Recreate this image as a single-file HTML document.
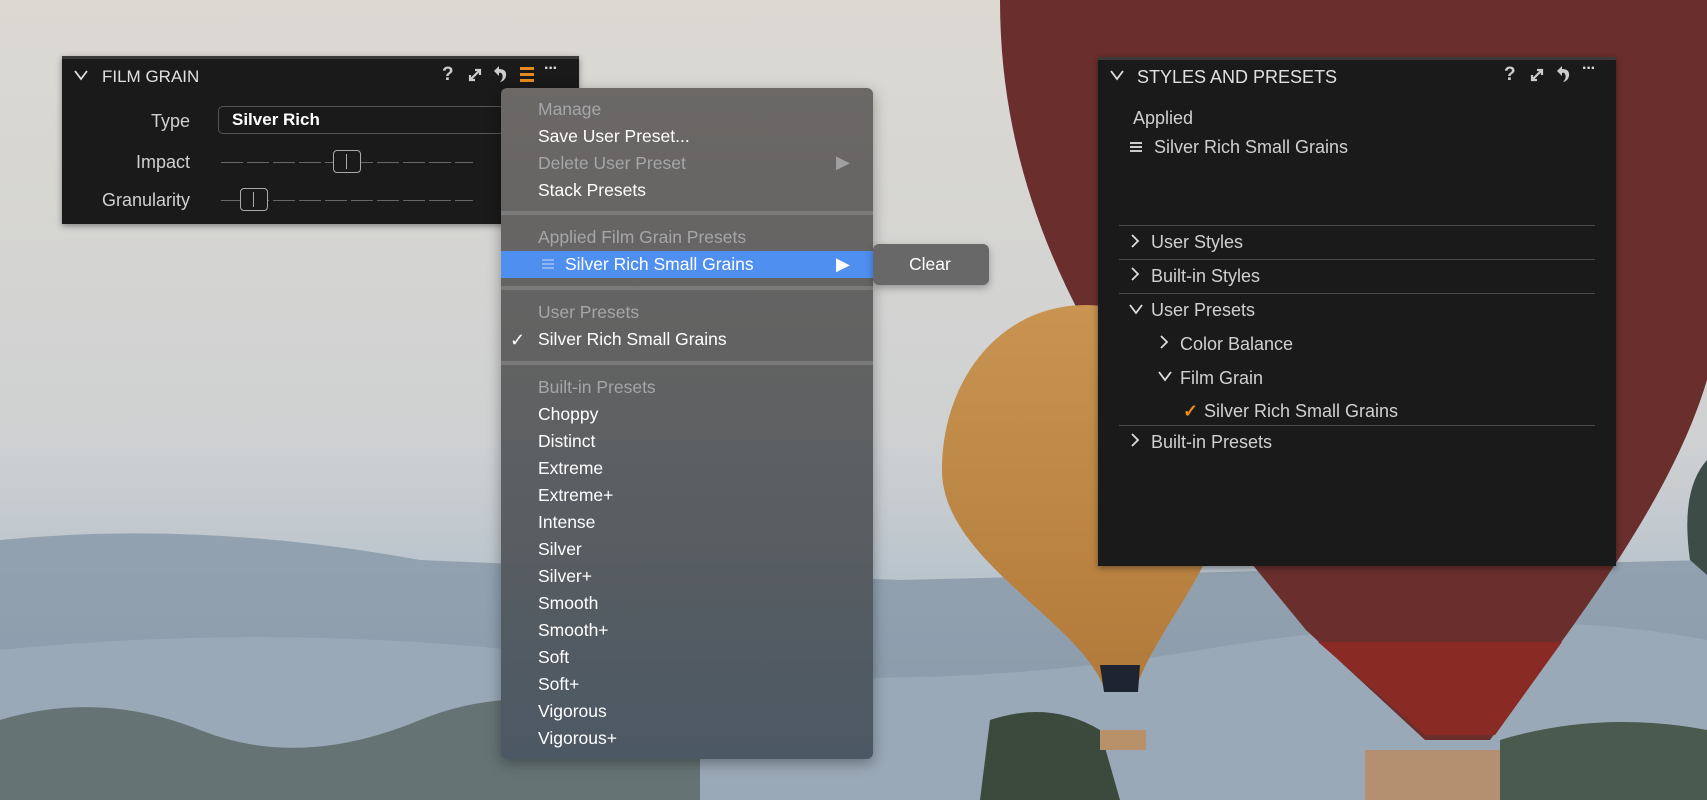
<!DOCTYPE html>
<html><head><meta charset="utf-8"><style>
*{margin:0;padding:0;box-sizing:border-box}
body{width:1707px;height:800px;overflow:hidden;position:relative;font-family:"Liberation Sans",sans-serif;background:#d8d6d2}
.abs{position:absolute}
.panel{position:absolute;background:#1a1a1a;border-top:3px solid #3a3a3a;box-shadow:0 2px 6px rgba(0,0,0,.4)}
.t{position:absolute;white-space:nowrap;line-height:1}
.mi{position:absolute;left:538px;font-size:17.5px;color:#fff;white-space:nowrap;line-height:1}
.dim{color:#a4a6a8}
.sep{position:absolute;left:0;width:372px;height:4px;background:rgba(150,150,150,.45)}
.ps{color:#d0d0d0;font-size:18px}
.hl{position:absolute;left:1119px;width:476px;height:1px;background:#4a4a4a}
</style></head><body>
<svg class="abs" style="left:0;top:0" width="1707" height="800">
<defs>
<linearGradient id="sky" x1="0" y1="0" x2="0" y2="1"><stop offset="0" stop-color="#dcd9d3"/><stop offset=".55" stop-color="#cfd1d2"/><stop offset=".75" stop-color="#b6c2cc"/><stop offset="1" stop-color="#8b9cac"/></linearGradient>
<linearGradient id="org" x1="0" y1="0" x2="0" y2="1"><stop offset="0" stop-color="#c89450"/><stop offset="1" stop-color="#b27a3a"/></linearGradient>
</defs>
<rect width="1707" height="800" fill="url(#sky)"/>
<path d="M0 540 Q200 520 420 560 L900 580 L1707 560 L1707 800 L0 800Z" fill="#8797a8" opacity=".8"/>
<path d="M0 650 Q300 620 600 660 T1200 650 T1707 640 L1707 800 L0 800Z" fill="#9aa9b7"/>
<path d="M0 720 Q100 690 200 730 T420 720 T700 740 L700 800 L0 800Z" fill="#4f5d58" opacity=".7"/>
<path d="M990 720 Q1050 700 1100 730 L1120 800 L980 800Z" fill="#3c4a3e"/>
<path d="M1500 740 Q1600 710 1707 730 L1707 800 L1500 800Z" fill="#4a5a4e"/>
<path d="M1707 460 Q1680 490 1690 560 L1707 575Z" fill="#3e4c48"/>
<path d="M1000 0 L1707 0 L1707 380 C1680 470 1620 560 1570 630 L1490 740 L1425 740 L1306 630 C 1150 440 1000 260 1000 0Z" fill="#6a2e2c"/>
<path d="M1318 642 L1562 642 L1495 735 L1425 735Z" fill="#8a2a24"/>
<path d="M1086 305 C 1170 305 1232 380 1230 470 C 1228 560 1160 620 1135 690 L1105 690 C 1080 620 942 560 942 470 C 942 380 1000 305 1086 305Z" fill="url(#org)"/>
<path d="M1100 665 L1140 665 L1138 692 L1104 692Z" fill="#1e2430"/>
<rect x="1365" y="750" width="135" height="50" fill="#b49070"/>
<rect x="1100" y="730" width="46" height="20" fill="#b8906a"/>
</svg>

<!-- FILM GRAIN -->
<div class="panel" style="left:62px;top:56px;width:517px;height:168px">
 <svg class="abs" style="left:12px;top:10px" width="14" height="12"><path d="M1 2 L7 10 L13 2" stroke="#ddd" stroke-width="1.8" fill="none"/></svg>
 <div class="t" style="left:40px;top:9px;font-size:17px;color:#e0e0e0">FILM GRAIN</div>
 <div class="t" style="left:380px;top:6px;font-size:19px;color:#ccc;font-weight:bold">?</div>
 <svg class="abs" style="left:405px;top:8px" width="16" height="16"><path d="M3 13 L13 3 M8 3 H13 V8 M3 8 V13 H8" stroke="#ccc" stroke-width="2.2" fill="none"/></svg>
 <svg class="abs" style="left:430px;top:6px" width="18" height="18"><path d="M2 6 L7 1 V4 Q15 4 14 11 Q13 16 8 17 Q12 13 10 9 Q9 7 7 8 V11Z" fill="#ccc"/></svg>
 <div class="abs" style="left:458px;top:8px;width:14px;height:3px;background:#e58a1e;box-shadow:0 6px 0 #e58a1e,0 12px 0 #e58a1e"></div>
 <div class="t" style="left:482px;top:2px;font-size:16px;color:#ddd;font-weight:bold;letter-spacing:-1px">···</div>
 <div class="t" style="left:85px;top:53px;font-size:18px;color:#d0d0d0;width:43px;text-align:right">Type</div>
 <div class="abs" style="left:156px;top:47px;width:300px;height:28px;border:1.5px solid #555;border-radius:5px"></div>
 <div class="t" style="left:170px;top:52px;font-size:17px;color:#fff;font-weight:bold">Silver Rich</div>
 <div class="t" style="left:40px;top:94px;font-size:18px;color:#d0d0d0;width:88px;text-align:right">Impact</div>
 <div class="t" style="left:0;top:132px;font-size:18px;color:#d0d0d0;width:128px;text-align:right">Granularity</div>
 <div class="abs" style="left:159px;top:103px;width:252px;height:1px;background:repeating-linear-gradient(90deg,#666 0 22px,transparent 22px 26px)"></div>
 <div class="abs" style="left:159px;top:141px;width:252px;height:1px;background:repeating-linear-gradient(90deg,#666 0 22px,transparent 22px 26px)"></div>
 <div class="abs" style="left:271px;top:91px;width:28px;height:23px;border:1.5px solid #aaa;border-radius:4px;background:#1a1a1a"></div>
 <div class="abs" style="left:284px;top:95px;width:1px;height:15px;background:#aaa"></div>
 <div class="abs" style="left:178px;top:129px;width:28px;height:23px;border:1.5px solid #aaa;border-radius:4px;background:#1a1a1a"></div>
 <div class="abs" style="left:191px;top:133px;width:1px;height:15px;background:#aaa"></div>
</div>

<!-- MENU -->
<div class="abs" style="left:501px;top:88px;width:372px;height:671px;border-radius:6px;background:linear-gradient(180deg,#6b6866 0%,#626262 40%,#4c5863 100%);box-shadow:0 4px 14px rgba(0,0,0,.35)">
 <div class="sep" style="top:123px"></div>
 <div class="sep" style="top:198px"></div>
 <div class="sep" style="top:273px"></div>
 <div class="abs" style="left:0;top:163px;width:372px;height:27px;background:#4f8ff0"></div>
</div>
<div class="mi dim" style="top:101px">Manage</div>
<div class="mi" style="top:128px">Save User Preset...</div>
<div class="mi dim" style="top:155px">Delete User Preset</div>
<div class="t" style="left:836px;top:153px;font-size:18px;color:#a0a0a0">▶</div>
<div class="mi" style="top:182px">Stack Presets</div>
<div class="mi dim" style="top:229px">Applied Film Grain Presets</div>
<div class="abs" style="left:542px;top:259px;width:12px;height:2px;background:#8fb4ee;box-shadow:0 4px 0 #8fb4ee,0 8px 0 #8fb4ee"></div>
<div class="mi" style="left:565px;top:256px">Silver Rich Small Grains</div>
<div class="t" style="left:836px;top:255px;font-size:18px;color:#fff">▶</div>
<div class="mi dim" style="top:304px">User Presets</div>
<div class="t" style="left:510px;top:331px;font-size:18px;color:#fff">✓</div>
<div class="mi" style="top:331px">Silver Rich Small Grains</div>
<div class="mi dim" style="top:379px">Built-in Presets</div>
<div class="mi" style="top:406px">Choppy</div>
<div class="mi" style="top:433px">Distinct</div>
<div class="mi" style="top:460px">Extreme</div>
<div class="mi" style="top:487px">Extreme+</div>
<div class="mi" style="top:514px">Intense</div>
<div class="mi" style="top:541px">Silver</div>
<div class="mi" style="top:568px">Silver+</div>
<div class="mi" style="top:595px">Smooth</div>
<div class="mi" style="top:622px">Smooth+</div>
<div class="mi" style="top:649px">Soft</div>
<div class="mi" style="top:676px">Soft+</div>
<div class="mi" style="top:703px">Vigorous</div>
<div class="mi" style="top:730px">Vigorous+</div>

<div class="abs" style="left:873px;top:244px;width:116px;height:41px;border-radius:6px;background:#686868;box-shadow:0 3px 8px rgba(0,0,0,.3)"></div>
<div class="t" style="left:909px;top:256px;font-size:17.5px;color:#fff">Clear</div>

<!-- STYLES -->
<div class="panel" style="left:1098px;top:57px;width:518px;height:509px">
 <svg class="abs" style="left:12px;top:9px" width="14" height="12"><path d="M1 2 L7 10 L13 2" stroke="#ddd" stroke-width="1.8" fill="none"/></svg>
 <div class="t" style="left:39px;top:8px;font-size:18px;color:#e0e0e0">STYLES AND PRESETS</div>
 <div class="t" style="left:406px;top:5px;font-size:19px;color:#ccc;font-weight:bold">?</div>
 <svg class="abs" style="left:431px;top:7px" width="16" height="16"><path d="M3 13 L13 3 M8 3 H13 V8 M3 8 V13 H8" stroke="#ccc" stroke-width="2.2" fill="none"/></svg>
 <svg class="abs" style="left:457px;top:5px" width="18" height="18"><path d="M2 6 L7 1 V4 Q15 4 14 11 Q13 16 8 17 Q12 13 10 9 Q9 7 7 8 V11Z" fill="#ccc"/></svg>
 <div class="t" style="left:484px;top:1px;font-size:16px;color:#ddd;font-weight:bold;letter-spacing:-1px">···</div>
 <div class="t ps" style="left:35px;top:49px">Applied</div>
 <div class="abs" style="left:32px;top:82px;width:12px;height:2px;background:#ccc;box-shadow:0 4px 0 #ccc,0 8px 0 #ccc"></div>
 <div class="t ps" style="left:56px;top:78px">Silver Rich Small Grains</div>
</div>
<div class="hl" style="top:225px"></div>
<div class="hl" style="top:259px"></div>
<div class="hl" style="top:293px"></div>
<div class="hl" style="top:425px"></div>
<svg class="abs" style="left:1130px;top:233px" width="10" height="16"><path d="M2 2 L8 8 L2 14" stroke="#ddd" stroke-width="1.8" fill="none"/></svg>
<div class="t ps" style="left:1151px;top:233px">User Styles</div>
<svg class="abs" style="left:1130px;top:266px" width="10" height="16"><path d="M2 2 L8 8 L2 14" stroke="#ddd" stroke-width="1.8" fill="none"/></svg>
<div class="t ps" style="left:1151px;top:267px">Built-in Styles</div>
<svg class="abs" style="left:1129px;top:303px" width="14" height="12"><path d="M1 2 L7 10 L13 2" stroke="#ddd" stroke-width="1.8" fill="none"/></svg>
<div class="t ps" style="left:1151px;top:301px">User Presets</div>
<svg class="abs" style="left:1159px;top:334px" width="10" height="16"><path d="M2 2 L8 8 L2 14" stroke="#ddd" stroke-width="1.8" fill="none"/></svg>
<div class="t ps" style="left:1180px;top:335px">Color Balance</div>
<svg class="abs" style="left:1158px;top:370px" width="14" height="12"><path d="M1 2 L7 10 L13 2" stroke="#ddd" stroke-width="1.8" fill="none"/></svg>
<div class="t ps" style="left:1180px;top:369px">Film Grain</div>
<div class="t" style="left:1183px;top:402px;font-size:18px;color:#f08a1a;font-weight:bold">✓</div>
<div class="t ps" style="left:1204px;top:402px">Silver Rich Small Grains</div>
<svg class="abs" style="left:1130px;top:432px" width="10" height="16"><path d="M2 2 L8 8 L2 14" stroke="#ddd" stroke-width="1.8" fill="none"/></svg>
<div class="t ps" style="left:1151px;top:433px">Built-in Presets</div>
</body></html>
